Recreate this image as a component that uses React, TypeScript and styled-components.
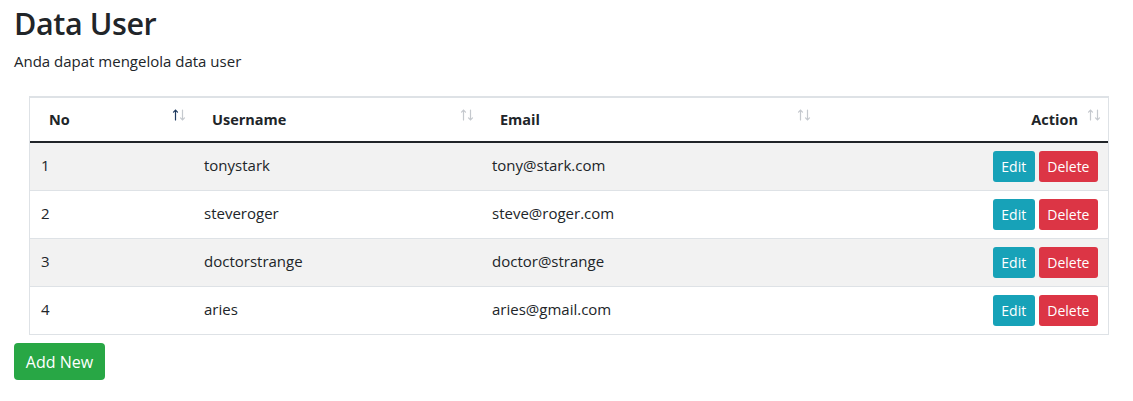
import React from "react";
import styled, { createGlobalStyle } from "styled-components";

const Global = createGlobalStyle`
  html, body { margin: 0; padding: 0; background: #fff; }
  body {
    font-family: "Open Sans", "Noto Sans", "Liberation Sans", sans-serif;
    color: #212529;
  }
`;

const Page = styled.div`
  padding: 5px 14px 20px 14px;
`;

const Title = styled.h1`
  margin: 0;
  font-size: 30.5px;
  font-weight: 600;
  line-height: 1.2;
  letter-spacing: -0.4px;
`;

const Subtitle = styled.p`
  margin: 8px 0 0 0;
  font-size: 15px;
  line-height: 1.5;
`;

const TableWrap = styled.div`
  margin: 24px 10px 0 15px;
  border: 1px solid #dee2e6;
  border-top-width: 2px;
  border-bottom: none;
`;

const Table = styled.table`
  width: 100%;
  border-collapse: collapse;
  table-layout: fixed;
  font-size: 15px;
`;

const Th = styled.th<{ $align?: "left" | "right"; $w?: number }>`
  position: relative;
  width: ${(p) => (p.$w ? `${p.$w}px` : "auto")};
  height: 44px;
  padding: 0 30px 0 ${(p) => (p.$align === "right" ? 10 : 19)}px;
  text-align: ${(p) => p.$align ?? "left"};
  font-weight: 700;
  font-size: 14.5px;
  vertical-align: middle;
  border-bottom: 2px solid #212529;
  box-sizing: border-box;
`;

const SortIcon = styled.span`
  position: absolute;
  top: 11px;
  right: 7px;
  display: block;
  line-height: 0;
`;

const Tr = styled.tr<{ $striped: boolean }>`
  background: ${(p) => (p.$striped ? "#f2f2f2" : "#fff")};
`;

const Td = styled.td<{ $align?: "left" | "right" }>`
  padding: 0 10px 0 11px;
  text-align: ${(p) => p.$align ?? "left"};
  vertical-align: top;
  border-bottom: 1px solid #dee2e6;
`;

const CellText = styled.div`
  padding-top: 11px;
  line-height: 22px;
`;

const Actions = styled.div`
  display: flex;
  justify-content: flex-end;
  gap: 4px;
  padding: 8px 0;
`;

const Btn = styled.button<{ $bg: string }>`
  display: block;
  background: ${(p) => p.$bg};
  color: #fff;
  border: none;
  border-radius: 3px;
  height: 31px;
  padding: 0 8.5px;
  font-family: inherit;
  font-size: 14px;
  line-height: 31px;
  cursor: pointer;
`;

const AddBtn = styled.button`
  margin-top: 8px;
  background: #28a745;
  color: #fff;
  border: none;
  border-radius: 4px;
  height: 37px;
  width: 91px;
  padding: 0;
  font-family: inherit;
  font-size: 16px;
  cursor: pointer;
`;

function Sort({ active }: { active?: boolean }) {
  const up = active ? "#1f3a5f" : "#c5c9ce";
  const down = "#c5c9ce";
  return (
    <SortIcon>
      <svg width="14" height="12" viewBox="0 0 14 12">
        <g fill="none" strokeWidth="1.2" strokeLinecap="round">
          <path d="M3.5 11V1.2M1.5 3.2L3.5 1.2L5.5 3.2" stroke={up} />
          <path d="M10.5 1V10.8M8.5 8.8L10.5 10.8L12.5 8.8" stroke={down} />
        </g>
      </svg>
    </SortIcon>
  );
}

const users = [
  { no: 1, username: "tonystark", email: "tony@stark.com" },
  { no: 2, username: "steveroger", email: "steve@roger.com" },
  { no: 3, username: "doctorstrange", email: "doctor@strange" },
  { no: 4, username: "aries", email: "aries@gmail.com" },
];

export default function App() {
  return (
    <>
      <Global />
      <Page>
        <Title>Data User</Title>
        <Subtitle>Anda dapat mengelola data user</Subtitle>
        <TableWrap>
          <Table>
            <thead>
              <tr>
                <Th $w={163}>
                  No
                  <Sort active />
                </Th>
                <Th $w={288}>
                  Username
                  <Sort />
                </Th>
                <Th $w={337}>
                  Email
                  <Sort />
                </Th>
                <Th $align="right">
                  Action
                  <Sort />
                </Th>
              </tr>
            </thead>
            <tbody>
              {users.map((u, i) => (
                <Tr key={u.no} $striped={i % 2 === 0}>
                  <Td>
                    <CellText>{u.no}</CellText>
                  </Td>
                  <Td>
                    <CellText>{u.username}</CellText>
                  </Td>
                  <Td>
                    <CellText>{u.email}</CellText>
                  </Td>
                  <Td $align="right">
                    <Actions>
                      <Btn $bg="#17a2b8">Edit</Btn>
                      <Btn $bg="#dc3545">Delete</Btn>
                    </Actions>
                  </Td>
                </Tr>
              ))}
            </tbody>
          </Table>
        </TableWrap>
        <AddBtn>Add New</AddBtn>
      </Page>
    </>
  );
}
